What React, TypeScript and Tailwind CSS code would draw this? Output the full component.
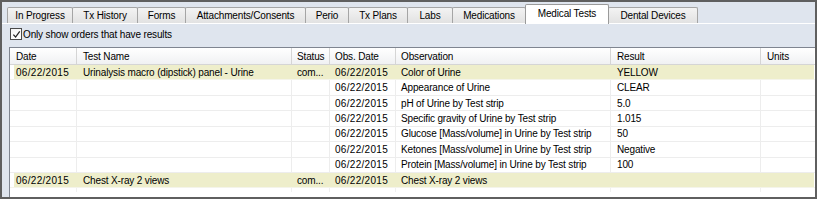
const TABS: { label: string; w: number; active?: boolean }[] = [
  { label: "In Progress", w: 66 },
  { label: "Tx History", w: 66 },
  { label: "Forms", w: 49 },
  { label: "Attachments/Consents", w: 121 },
  { label: "Perio", w: 44 },
  { label: "Tx Plans", w: 60 },
  { label: "Labs", w: 46 },
  { label: "Medications", w: 74 },
  { label: "Medical Tests", w: 84, active: true },
  { label: "Dental Devices", w: 90 },
];

type Row = {
  date?: string;
  test?: string;
  status?: string;
  obsDate: string;
  observation: string;
  result: string;
  head?: boolean;
};

const ROWS: Row[] = [
  {
    date: "06/22/2015",
    test: "Urinalysis macro (dipstick) panel - Urine",
    status: "com...",
    obsDate: "06/22/2015",
    observation: "Color of Urine",
    result: "YELLOW",
    head: true,
  },
  { obsDate: "06/22/2015", observation: "Appearance of Urine", result: "CLEAR" },
  { obsDate: "06/22/2015", observation: "pH of Urine by Test strip", result: "5.0" },
  { obsDate: "06/22/2015", observation: "Specific gravity of Urine by Test strip", result: "1.015" },
  { obsDate: "06/22/2015", observation: "Glucose [Mass/volume] in Urine by Test strip", result: "50" },
  { obsDate: "06/22/2015", observation: "Ketones [Mass/volume] in Urine by Test strip", result: "Negative" },
  { obsDate: "06/22/2015", observation: "Protein [Mass/volume] in Urine by Test strip", result: "100" },
  {
    date: "06/22/2015",
    test: "Chest X-ray 2 views",
    status: "com...",
    obsDate: "06/22/2015",
    observation: "Chest X-ray 2 views",
    result: "",
    head: true,
  },
];

const COLS = [
  { key: "date", label: "Date", w: "w-[67px]", pl: "pl-[6px]" },
  { key: "test", label: "Test Name", w: "w-[215px]", pl: "pl-[6px]" },
  { key: "status", label: "Status", w: "w-[38px]", pl: "pl-[5px]" },
  { key: "obsDate", label: "Obs. Date", w: "w-[66px]", pl: "pl-[5px]" },
  { key: "observation", label: "Observation", w: "w-[215px]", pl: "pl-[5px]" },
  { key: "result", label: "Result", w: "w-[150px]", pl: "pl-[6px]" },
] as const;

const isDate = (key: string) => key === "date" || key === "obsDate";

export default function App() {
  return (
    <div className="w-[817px] h-[202px] bg-white font-['Liberation_Sans',Arial,sans-serif] text-[10px] tracking-[-0.15px] text-black">
      <div className="h-[199px] border-2 border-[#5f5f5f] bg-[#dfe5ee] flex flex-col overflow-hidden">
        {/* tab strip */}
        <div className="h-[21px] shrink-0 flex items-end pl-[5px]">
          {TABS.map((t, i) => (
            <div
              key={t.label}
              style={{ width: t.w }}
              className={
                (i > 0 ? "-ml-px " : "") +
                (t.active
                  ? "relative z-10 h-[20px] -mb-px bg-white border border-b-0 border-[#9a9a9a] rounded-t-[2px] flex items-center justify-center pb-[2px]"
                  : "h-[16px] bg-gradient-to-b from-[#f3f3f3] to-[#e2e2e2] border border-b-0 border-[#a5a5a5] rounded-t-[2px] flex items-center justify-center")
              }
            >
              <span className="whitespace-nowrap">{t.label}</span>
            </div>
          ))}
        </div>

        {/* tab page */}
        <div className="flex-1 flex flex-col border-t border-white">
          <label className="h-[23px] shrink-0 flex items-start pt-[4px] pl-[8px] gap-[1px]">
            <span className="w-[12px] h-[12px] border border-[#4a4a4a] bg-gradient-to-br from-[#f4f4f4] to-white flex items-center justify-center">
              <svg viewBox="0 0 10 10" className="w-[9px] h-[9px]">
                <path d="M1.5 5.2 L4 7.8 L8.6 1.6" fill="none" stroke="#222" strokeWidth="1.4" />
              </svg>
            </span>
            <span className="leading-[13px] whitespace-nowrap">Only show orders that have results</span>
          </label>

          {/* grid */}
          <div className="flex-1 ml-[7px] border-l border-t border-[#7f8590] bg-white flex flex-col">
            <div className="h-[17px] shrink-0 flex bg-gradient-to-b from-white to-[#f0f1f3] border-b border-[#d5d5d5]">
              {COLS.map((c) => (
                <div key={c.key} className={`${c.w} ${c.pl} shrink-0 border-r border-[#d5d5d5] flex items-center whitespace-nowrap`}>
                  {c.label}
                </div>
              ))}
              <div className="flex-1 pl-[6px] flex items-center border-r border-white">Units</div>
            </div>

            {ROWS.map((r, i) => (
              <div
                key={i}
                className={`h-[15.43px] shrink-0 flex border-b ${r.head ? "bg-[#eeeecb] border-[#f4f4ea]" : "border-[#ededed]"}`}
              >
                {COLS.map((c, ci) => (
                  <div
                    key={c.key}
                    className={`${c.w} shrink-0 border-r ${r.head ? "border-[#eeeecb]" : "border-[#ededed]"} ${
                      ci === 0 && r.head ? "border-l-4 border-l-white pl-[2px]" : c.pl
                    } flex items-center whitespace-nowrap overflow-hidden ${isDate(c.key) ? "tracking-[0.3px]" : ""}`}
                  >
                    {(r as Record<string, string | boolean | undefined>)[c.key] as string}
                  </div>
                ))}
                <div className="flex-1 border-r border-white" />
              </div>
            ))}

            <div className="flex-1 flex">
              {COLS.map((c) => (
                <div key={c.key} className={`${c.w} shrink-0 border-r border-[#f0f0f0] h-[4px]`} />
              ))}
            </div>
          </div>
        </div>
      </div>
    </div>
  );
}
